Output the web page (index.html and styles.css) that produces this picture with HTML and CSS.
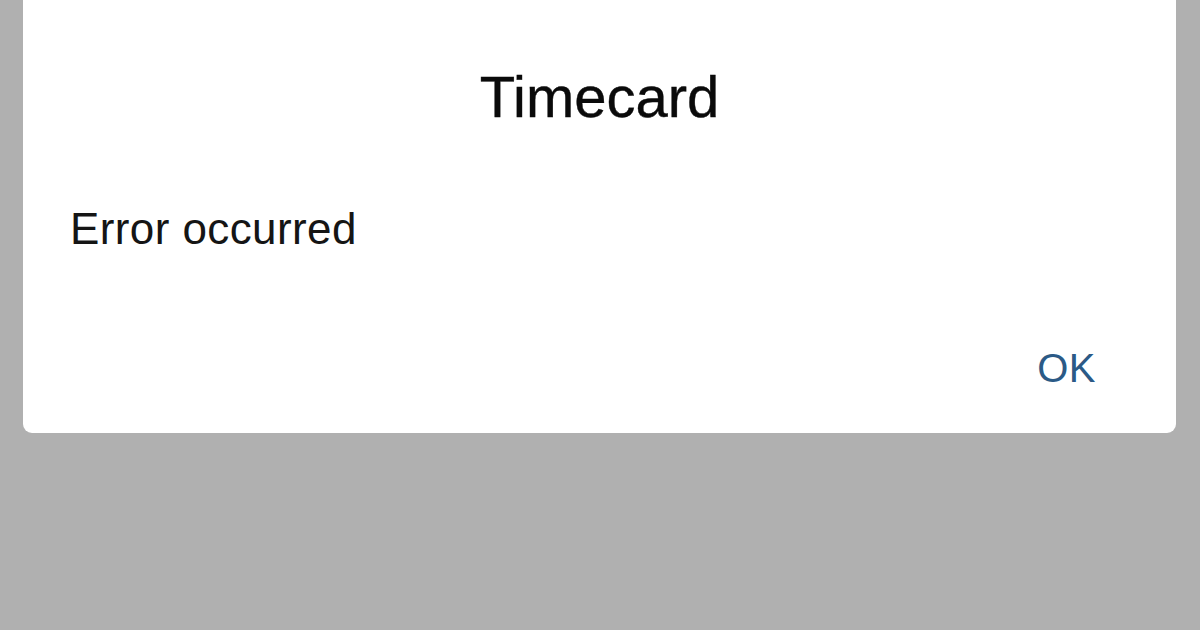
FILE: index.html
```html
<!DOCTYPE html>
<html lang="en">
<head>
<meta charset="utf-8">
<title>Timecard</title>
<link rel="stylesheet" href="styles.css">
</head>
<body>
  <div class="screen">
    <div class="alert" role="alertdialog">
      <h1 class="alert-title">Timecard</h1>
      <p class="alert-message">Error occurred</p>
      <div class="alert-actions">
        <button class="alert-button" type="button">OK</button>
      </div>
    </div>
  </div>
</body>
</html>
```

FILE: styles.css
```css
html, body {
  margin: 0;
  padding: 0;
  height: 100%;
}

body {
  background: #b0b0b0;
  font-family: "Liberation Sans", Arial, sans-serif;
  color: #111;
}

.screen {
  padding: 0 24px 0 23px;
}

.alert {
  background: #ffffff;
  border-radius: 0 0 9px 9px;
  height: 433px;
  box-sizing: border-box;
  display: flex;
  flex-direction: column;
  padding: 68px 80px 0 47px;
}

/* title spans the full alert width so it centres on the card */
.alert-title {
  margin: 0 -80px 0 -47px;
  font-size: 58px;
  line-height: 1;
  font-weight: 400;
  text-align: center;
  color: #0a0a0a;
  -webkit-text-stroke: 0.4px #0a0a0a;
}

.alert-message {
  margin: 81px 0 0;
  font-size: 44px;
  line-height: 1;
  letter-spacing: 0.4px;
  color: #151515;
}

.alert-actions {
  display: flex;
  justify-content: flex-end;
  margin-top: 97px;
}

.alert-button {
  border: 0;
  background: none;
  padding: 0;
  font-family: inherit;
  font-size: 40px;
  line-height: 1;
  letter-spacing: 0.5px;
  color: #2b5a86;
  cursor: pointer;
}
```
